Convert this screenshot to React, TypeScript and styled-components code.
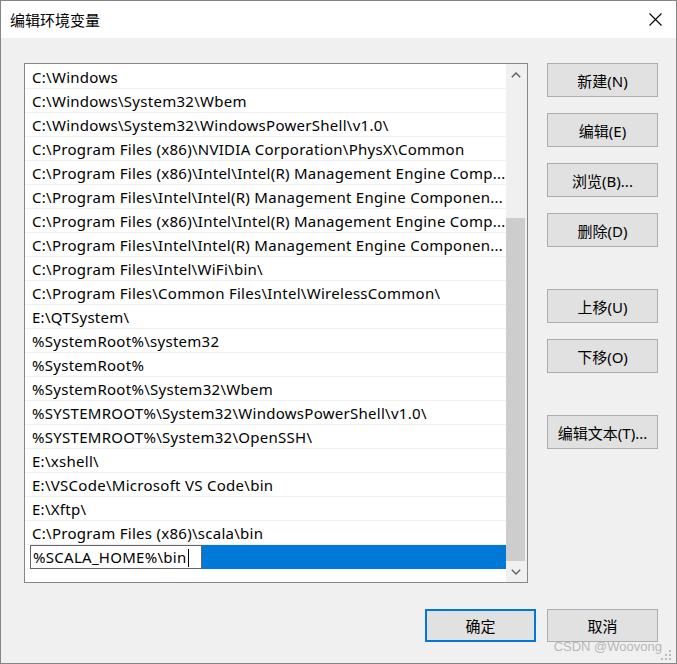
import React from "react";
import styled, { createGlobalStyle } from "styled-components";

const FONT = `"Noto Sans", "Noto Sans CJK SC", sans-serif`;

const GlobalStyle = createGlobalStyle`
  html, body { margin: 0; padding: 0; background: #f0f0f0; }
  body { font-family: ${FONT}; }
  * { box-sizing: border-box; }
`;

const Window = styled.div`
  position: relative;
  width: 677px;
  height: 664px;
  border: 1px solid #858585;
  background: #f0f0f0;
  display: flex;
  flex-direction: column;
  font-family: ${FONT};
  color: #000;
  overflow: hidden;
`;

const TitleBar = styled.div`
  height: 37px;
  flex-shrink: 0;
  background: #fff;
  display: flex;
  align-items: center;
  justify-content: space-between;
  padding: 0 14px 0 9px;
`;

const Title = styled.span`
  font-family: "Noto Sans CJK SC", sans-serif;
  font-size: 15px;
  line-height: 20px;
  padding-top: 1px;
`;

const CloseButton = styled.div`
  width: 13px;
  height: 13px;
  display: flex;
  align-items: center;
  justify-content: center;
`;

const Body = styled.div`
  flex: 1;
  display: flex;
  flex-direction: column;
  padding: 25px 18px 0 23px;
`;

const Main = styled.div`
  display: flex;
  align-items: flex-start;
  gap: 19px;
`;

const ListBox = styled.div`
  width: 504px;
  height: 520px;
  border: 1px solid #828790;
  background: #fff;
  display: flex;
`;

const Rows = styled.div`
  flex: 1;
  min-width: 0;
  padding-top: 1px;
  display: flex;
  flex-direction: column;
`;

const Row = styled.div<{ $editing?: boolean }>`
  height: 24px;
  flex-shrink: 0;
  display: flex;
  align-items: stretch;
  border-bottom: ${(p) => (p.$editing ? "0" : "1px solid #f0f0f0")};
  padding-left: ${(p) => (p.$editing ? "5px" : "0")};
  font-size: 15px;
  letter-spacing: 0.28px;
  white-space: nowrap;
  overflow: hidden;
`;

const RowText = styled.span`
  padding: 1px 0 0 7px;
  line-height: 22px;
  overflow: hidden;
`;

const EditBox = styled.div`
  display: flex;
  align-items: center;
  height: 24px;
  border: 1px solid #646464;
  background: #fff;
  padding: 1px 12px 0 2px;
  line-height: 21px;
`;

const Caret = styled.span`
  display: inline-block;
  width: 1px;
  height: 18px;
  background: #000;
  margin-left: 1px;
`;

const Highlight = styled.div`
  flex: 1;
  background: #0078d7;
`;

const ScrollBar = styled.div`
  width: 21px;
  flex-shrink: 0;
  background: #f0f0f0;
  display: flex;
  flex-direction: column;
`;

const ScrollArrow = styled.div`
  height: 21px;
  flex-shrink: 0;
  display: flex;
  align-items: center;
  justify-content: center;
  padding-right: 1px;
`;

const Track = styled.div`
  flex: 1;
  display: flex;
  flex-direction: column;
  justify-content: flex-end;
`;

const Thumb = styled.div`
  height: 343px;
  width: 19px;
  background: #cdcdcd;
`;

const ButtonColumn = styled.div`
  display: flex;
  flex-direction: column;
  gap: 42px;
`;

const ButtonGroup = styled.div`
  display: flex;
  flex-direction: column;
  gap: 16px;
`;

const Button = styled.button<{ $default?: boolean; $height?: number }>`
  width: 111px;
  height: ${(p) => p.$height ?? 34}px;
  background: #e1e1e1;
  border: ${(p) => (p.$default ? "2px solid #0078d7" : "1px solid #adadad")};
  padding: 0;
  margin: 0;
  font-family: ${FONT};
  font-size: 15px;
  color: #000;
  display: flex;
  align-items: center;
  justify-content: center;
`;

const Footer = styled.div`
  display: flex;
  justify-content: flex-end;
  gap: 11px;
  margin-top: 26px;
`;

const Watermark = styled.div`
  position: absolute;
  right: 14px;
  bottom: 9px;
  font-family: "Liberation Sans", Arial, sans-serif;
  font-size: 13px;
  line-height: 15px;
  color: #b8b8b8;
`;

const Grip = styled.svg`
  position: absolute;
  right: 3px;
  bottom: 1px;
`;

const paths = [
  "C:\\Windows",
  "C:\\Windows\\System32\\Wbem",
  "C:\\Windows\\System32\\WindowsPowerShell\\v1.0\\",
  "C:\\Program Files (x86)\\NVIDIA Corporation\\PhysX\\Common",
  "C:\\Program Files (x86)\\Intel\\Intel(R) Management Engine Comp...",
  "C:\\Program Files\\Intel\\Intel(R) Management Engine Componen...",
  "C:\\Program Files (x86)\\Intel\\Intel(R) Management Engine Comp...",
  "C:\\Program Files\\Intel\\Intel(R) Management Engine Componen...",
  "C:\\Program Files\\Intel\\WiFi\\bin\\",
  "C:\\Program Files\\Common Files\\Intel\\WirelessCommon\\",
  "E:\\QTSystem\\",
  "%SystemRoot%\\system32",
  "%SystemRoot%",
  "%SystemRoot%\\System32\\Wbem",
  "%SYSTEMROOT%\\System32\\WindowsPowerShell\\v1.0\\",
  "%SYSTEMROOT%\\System32\\OpenSSH\\",
  "E:\\xshell\\",
  "E:\\VSCode\\Microsoft VS Code\\bin",
  "E:\\Xftp\\",
  "C:\\Program Files (x86)\\scala\\bin",
];

const Chevron = ({ down }: { down?: boolean }) => (
  <svg width="10" height="6" viewBox="0 0 10 6">
    <polyline
      points={down ? "0.8,0.8 5,5 9.2,0.8" : "0.8,5.2 5,1 9.2,5.2"}
      fill="none"
      stroke="#606060"
      strokeWidth="1.4"
    />
  </svg>
);

export default function App() {
  return (
    <>
      <GlobalStyle />
      <Window>
        <TitleBar>
          <Title>编辑环境变量</Title>
          <CloseButton>
            <svg width="13" height="13" viewBox="0 0 13 13">
              <path d="M0.5 0.5 L12.5 12.5 M12.5 0.5 L0.5 12.5" stroke="#000" strokeWidth="1.1" />
            </svg>
          </CloseButton>
        </TitleBar>
        <Body>
          <Main>
            <ListBox>
              <Rows>
                {paths.map((p, i) => (
                  <Row key={i}>
                    <RowText>{p}</RowText>
                  </Row>
                ))}
                <Row $editing>
                  <EditBox>
                    %SCALA_HOME%\bin
                    <Caret />
                  </EditBox>
                  <Highlight />
                </Row>
              </Rows>
              <ScrollBar>
                <ScrollArrow>
                  <Chevron />
                </ScrollArrow>
                <Track>
                  <Thumb />
                </Track>
                <ScrollArrow>
                  <Chevron down />
                </ScrollArrow>
              </ScrollBar>
            </ListBox>
            <ButtonColumn>
              <ButtonGroup>
                <Button>新建(N)</Button>
                <Button>编辑(E)</Button>
                <Button>浏览(B)...</Button>
                <Button>删除(D)</Button>
              </ButtonGroup>
              <ButtonGroup>
                <Button>上移(U)</Button>
                <Button>下移(O)</Button>
              </ButtonGroup>
              <ButtonGroup>
                <Button>编辑文本(T)...</Button>
              </ButtonGroup>
            </ButtonColumn>
          </Main>
          <Footer>
            <Button $default $height={33}>确定</Button>
            <Button $height={33}>取消</Button>
          </Footer>
        </Body>
        <Watermark>CSDN @Woovong</Watermark>
        <Grip width="12" height="12" viewBox="0 0 12 12">
          <rect x="8" y="0" width="2" height="2" fill="#bcbcbc" />
          <rect x="4" y="4" width="2" height="2" fill="#bcbcbc" />
          <rect x="8" y="4" width="2" height="2" fill="#bcbcbc" />
          <rect x="0" y="8" width="2" height="2" fill="#bcbcbc" />
          <rect x="4" y="8" width="2" height="2" fill="#bcbcbc" />
          <rect x="8" y="8" width="2" height="2" fill="#bcbcbc" />
        </Grip>
      </Window>
    </>
  );
}
